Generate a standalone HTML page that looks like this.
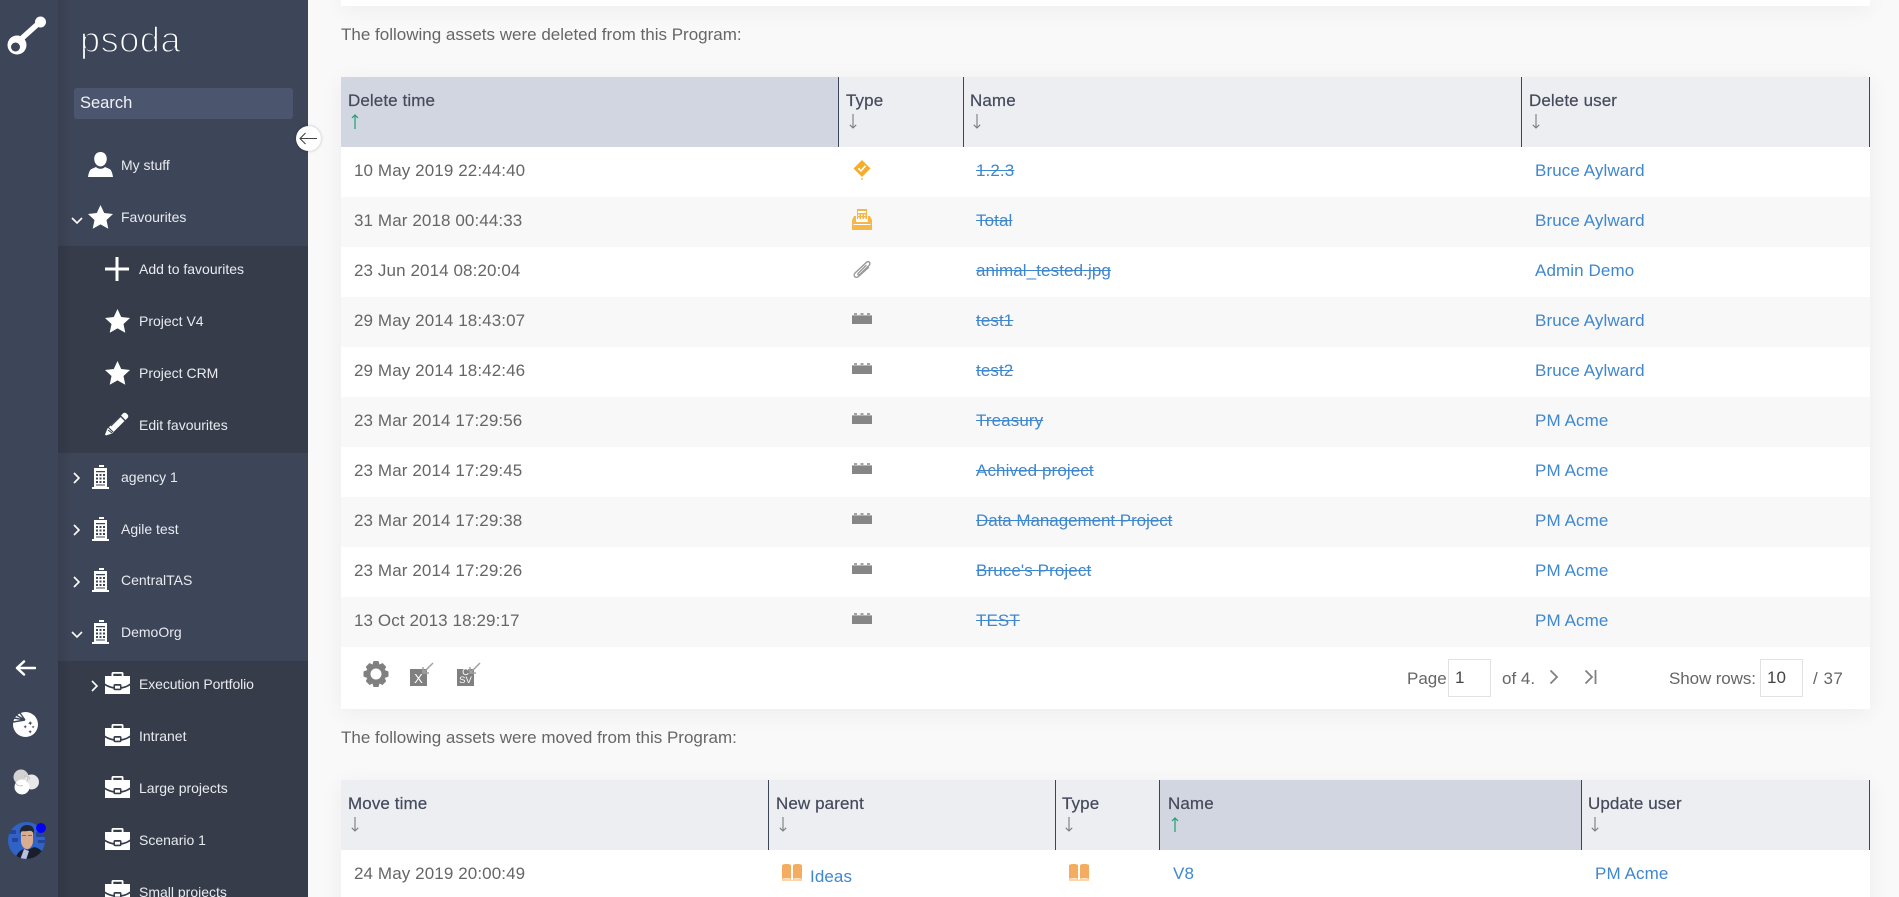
<!DOCTYPE html>
<html lang="en"><head><meta charset="utf-8"><title>psoda</title>
<style>
html,body{margin:0;padding:0;width:1899px;height:897px;overflow:hidden}
body{background:#f9f9f9;font-family:"Liberation Sans",sans-serif;color:#666}
#w{position:relative;display:block;left:0;top:0;width:1899px;height:897px;overflow:hidden;background:#f9f9f9}
#w div,#w a,#w svg,#w span{position:absolute}
.t{white-space:nowrap;font-size:17px;line-height:20px}
.rail{left:0;top:0;width:58px;height:897px;background:#3d4659}
.side{left:58px;top:0;width:250px;height:897px;background:#3d4558;overflow:hidden}
.shade{left:58px;top:0;width:14px;height:897px;background:linear-gradient(90deg,rgba(0,0,0,.09),rgba(0,0,0,0))}
.sub{left:0;width:250px;background:#363c4a}
.m{color:#e9ebef;font-size:14px;line-height:20px;white-space:nowrap}
.card{background:#fff;left:341px;width:1529px;box-shadow:0 4px 22px rgba(0,0,0,.055)}
.h{height:70px;background:#edeef2;box-sizing:border-box;border-right:1px solid #3d4558}
.h.on{background:#d2d6e0}
.hd{color:#444a5c;font-size:17px;line-height:20px;white-space:nowrap;-webkit-text-stroke:.2px #444a5c;letter-spacing:.1px}
.r{left:341px;width:1529px;height:50px;background:#fff}
.r.a{background:#f8f8f9}
.l{color:#3f87cf;font-size:17px;line-height:20px;white-space:nowrap;letter-spacing:.1px}
.s{text-decoration:line-through}
.d{color:#666;font-size:17px;line-height:20px;white-space:nowrap;letter-spacing:.1px}
input{position:absolute;box-sizing:border-box;border:1px solid #e2e2e2;background:#fff;font:17px "Liberation Sans",sans-serif;color:#444;padding:0 0 0 6px;width:43px;height:38px;outline:none}
</style></head><body><div id="w">
<svg width="0" height="0" style="left:0;top:0">
<defs>
<symbol id="star" viewBox="0 0 25 24"><path fill="#fff" d="M12.500 0l3.700 8 8.800 1-6.500 6 1.800 8.800-7.800-4.400-7.800 4.400L6.500 15 0 9l8.800-1z"/></symbol>
<symbol id="user" viewBox="0 0 25 25"><path fill="#fff" d="M12.500 0c3.900 0 6.300 3 6.300 6.800 0 4-2.700 7.700-6.300 7.700S6.200 10.800 6.200 6.800C6.200 3 8.600 0 12.500 0zM8 15c1.400 1.400 3 1.800 4.500 1.800S15.600 16.400 17 15l4.500 2c2 1 3 4.500 3.500 8H0c.5-3.500 1.500-7 3.500-8z"/></symbol>
<symbol id="bld" viewBox="0 0 17 24"><path fill="#fff" d="M7 0h5v2H7zM2 3h13v19h2v2H0v-2h2z"/><path fill="#3d4558" d="M4 6h9v1.200H4zM4 9h2v2H4zm3.500 0h2v2h-2zM11 9h2v2h-2zM4 12.500h2v2H4zm3.500 0h2v2h-2zm3.500 0h2v2h-2zM4 16h2v2H4zm3.500 0h2v2h-2zm3.500 0h2v2h-2zM4 19.500h9v1H4z"/></symbol>
<symbol id="brief" viewBox="0 0 25 22"><path fill="#fff" d="M8 0h9c1 0 1.500.8 1.500 1.500V4H25v7.500c-3 2-6 3-8.500 3.400v-1.400c0-1-.6-1.500-1.500-1.500h-5c-.9 0-1.500.5-1.500 1.500v1.400C6 14.500 3 13.500 0 11.500V4h6.500V1.500C6.500.8 7 0 8 0zm.3 1.800V4h8.400V1.800zM0 13.500c3 1.800 6 2.800 8.500 3.200 0 1 .6 1.500 1.500 1.500h5c.9 0 1.500-.5 1.500-1.500 2.500-.4 5.500-1.400 8.500-3.200V22H0zM10 13.800h5v2.800h-5z"/></symbol>
<symbol id="blk" viewBox="0 0 20 11"><path fill="#868686" d="M0 2.400h20V11H0zM2 .3h3v1.400H2zM8.500.3h3v1.400h-3zM15 .3h3v1.400h-3z"/></symbol>
<symbol id="book" viewBox="0 0 20 18"><path fill="#f4ac60" d="M0 2c3-1.500 6.500-1.500 9 0v14c-2.500-1.300-6-1.300-9 0zM20 2c-3-1.500-6.500-1.500-9 0v14c2.500-1.300 6-1.300 9 0z"/><path fill="#fbd5a9" d="M0 16.300c3-1.300 6.500-1.300 10 .4 3.500-1.700 7-1.700 10-.4V18H0z"/></symbol>
<symbol id="up" viewBox="0 0 12 15"><path fill="none" stroke="#1f9d74" stroke-width="1.200" d="M6 15V1M3 4L6 1l3 3"/></symbol>
<symbol id="dn" viewBox="0 0 12 15"><path fill="none" stroke="#7c7c7c" stroke-width="1.100" d="M6 0v14M2.800 10.800L6 14l3.200-3.200"/></symbol>
<symbol id="cr" viewBox="0 0 10 12"><path fill="none" stroke="#fff" stroke-width="1.600" d="M2 1l5 5-5 5"/></symbol>
<symbol id="cd" viewBox="0 0 12 10"><path fill="none" stroke="#fff" stroke-width="1.600" d="M1 2l5 5 5-5"/></symbol>
</defs></svg>

<!-- main -->
<div class="card" style="top:-10px;height:16px"></div>
<div class="t" style="left:341px;top:25px;">The following assets were deleted from this Program:</div>

<div class="card" style="top:77px;height:632px"></div>
<div class="h on" style="left:341px;top:77px;width:498px"></div>
<div class="h" style="left:839px;top:77px;width:125px"></div>
<div class="h" style="left:964px;top:77px;width:558px"></div>
<div class="h" style="left:1522px;top:77px;width:348px"></div>
<div class="hd" style="left:348px;top:91px">Delete time</div><svg style="left:349px;top:114px" width="12" height="15"><use href="#up"/></svg>
<div class="hd" style="left:846px;top:91px">Type</div><svg style="left:847px;top:114px" width="12" height="15"><use href="#dn"/></svg>
<div class="hd" style="left:970px;top:91px">Name</div><svg style="left:971px;top:114px" width="12" height="15"><use href="#dn"/></svg>
<div class="hd" style="left:1529px;top:91px">Delete user</div><svg style="left:1530px;top:114px" width="12" height="15"><use href="#dn"/></svg>

<div class="r" style="top:147px"></div><div class="r a" style="top:197px"></div><div class="r" style="top:247px"></div><div class="r a" style="top:297px"></div><div class="r" style="top:347px"></div><div class="r a" style="top:397px"></div><div class="r" style="top:447px"></div><div class="r a" style="top:497px"></div><div class="r" style="top:547px"></div><div class="r a" style="top:597px"></div>

<div class="d" style="left:354px;top:161px">10 May 2019 22:44:40</div>
<div class="d" style="left:354px;top:211px">31 Mar 2018 00:44:33</div>
<div class="d" style="left:354px;top:261px">23 Jun 2014 08:20:04</div>
<div class="d" style="left:354px;top:311px">29 May 2014 18:43:07</div>
<div class="d" style="left:354px;top:361px">29 May 2014 18:42:46</div>
<div class="d" style="left:354px;top:411px">23 Mar 2014 17:29:56</div>
<div class="d" style="left:354px;top:461px">23 Mar 2014 17:29:45</div>
<div class="d" style="left:354px;top:511px">23 Mar 2014 17:29:38</div>
<div class="d" style="left:354px;top:561px">23 Mar 2014 17:29:26</div>
<div class="d" style="left:354px;top:611px">13 Oct 2013 18:29:17</div>

<svg style="left:852px;top:159px" width="20" height="22" viewBox="0 0 20 22"><path fill="#f5ad2e" d="M10 1l8.500 8.500L10 18 1.500 9.500z"/><path fill="none" stroke="#fff" stroke-width="1.600" d="M6.300 9.300l2.700 2.500 4.500-5"/><rect x="9" y="19" width="2" height="2" fill="#f8cd80"/></svg>
<svg style="left:852px;top:209px" width="20" height="21" viewBox="0 0 20 21"><path fill="#f7b748" d="M5 0h10v10H5zM0 11l2-4h2v6h12V7h2l2 4v10H0z"/><path fill="#fff" d="M6 2h8v2H6zM6 5.500h1.500V7H6zm3 0h1.500V7H9zm3 0h1.500V7H12zM6 8.500h1.500V10H6zm3 0h1.500V10H9zm3 0h1.500V10H12zM5 11.500h10V13H5zM1.500 15h17v1h-17z"/></svg>
<svg style="left:852px;top:260px" width="20" height="19" viewBox="0 0 20 19"><path fill="none" stroke="#9a9a9a" stroke-width="1.400" stroke-linecap="round" d="M14 5.500L6.500 13c-1.300 1.300-.3 2.800 1 1.800L17 5.500c2-2 .2-5-2.300-3.400L3 13c-2.500 2.700.8 6 3.500 3.500L16.500 7.500"/></svg>
<svg style="left:852px;top:313px" width="20" height="11"><use href="#blk"/></svg>
<svg style="left:852px;top:363px" width="20" height="11"><use href="#blk"/></svg>
<svg style="left:852px;top:413px" width="20" height="11"><use href="#blk"/></svg>
<svg style="left:852px;top:463px" width="20" height="11"><use href="#blk"/></svg>
<svg style="left:852px;top:513px" width="20" height="11"><use href="#blk"/></svg>
<svg style="left:852px;top:563px" width="20" height="11"><use href="#blk"/></svg>
<svg style="left:852px;top:613px" width="20" height="11"><use href="#blk"/></svg>

<div class="l s" style="left:976px;top:161px">1.2.3</div>
<div class="l s" style="left:976px;top:211px">Total</div>
<div class="l s" style="left:976px;top:261px">animal_tested.jpg</div>
<div class="l s" style="left:976px;top:311px">test1</div>
<div class="l s" style="left:976px;top:361px">test2</div>
<div class="l s" style="left:976px;top:411px">Treasury</div>
<div class="l s" style="left:976px;top:461px">Achived project</div>
<div class="l s" style="left:976px;top:511px;letter-spacing:-.05px">Data Management Project</div>
<div class="l s" style="left:976px;top:561px">Bruce's Project</div>
<div class="l s" style="left:976px;top:611px">TEST</div>

<div class="l" style="left:1535px;top:161px">Bruce Aylward</div>
<div class="l" style="left:1535px;top:211px">Bruce Aylward</div>
<div class="l" style="left:1535px;top:261px">Admin Demo</div>
<div class="l" style="left:1535px;top:311px">Bruce Aylward</div>
<div class="l" style="left:1535px;top:361px">Bruce Aylward</div>
<div class="l" style="left:1535px;top:411px">PM Acme</div>
<div class="l" style="left:1535px;top:461px">PM Acme</div>
<div class="l" style="left:1535px;top:511px">PM Acme</div>
<div class="l" style="left:1535px;top:561px">PM Acme</div>
<div class="l" style="left:1535px;top:611px">PM Acme</div>

<!-- footer -->
<svg style="left:363px;top:661px" width="26" height="26" viewBox="0 0 26 26"><path fill="#808080" fill-rule="evenodd" d="M10.500 0h5l1 3.500 3-1.500 3.700 3.700L21.700 9l3.800 1.500v5L21.700 17l1.500 3.300-3.700 3.700-3-1.500-1 3.500h-5l-1-3.500-3 1.500-3.700-3.700L4.300 17 .5 15.500v-5L4.300 9 2.800 5.700 6.500 2l3 1.500zM13 7.500a5.500 5.500 0 1 0 0 11 5.500 5.500 0 0 0 0-11z"/></svg>
<svg style="left:410px;top:662px" width="24" height="24" viewBox="0 0 24 24"><rect x="0" y="7" width="17" height="17" fill="#808080"/><path fill="none" stroke="#a0a0a0" stroke-width="1.500" d="M23 1l-10 10M13 5v6h6"/></svg>
<div style="left:410px;top:671px;width:17px;text-align:center;color:#fff;font-size:13px;line-height:15px">X</div>
<svg style="left:457px;top:662px" width="24" height="24" viewBox="0 0 24 24"><rect x="0" y="7" width="17" height="17" fill="#808080"/><path fill="none" stroke="#a0a0a0" stroke-width="1.500" d="M23 1l-10 10M13 5v6h6"/></svg>
<div style="left:457px;top:669px;width:17px;text-align:center;color:#fff;font-size:9.500px;line-height:8px">C<br>SV</div>

<div class="t" style="left:1407px;top:669px">Page</div>
<input value="1" style="left:1448px;top:659px">
<div class="t" style="left:1502px;top:669px">of 4.</div>
<svg style="left:1549px;top:669px" width="10" height="16" viewBox="0 0 10 16"><path fill="none" stroke="#808080" stroke-width="1.800" d="M1.500 1.500L8 8l-6.500 6.500"/></svg>
<svg style="left:1584px;top:669px" width="14" height="16" viewBox="0 0 14 16"><path fill="none" stroke="#808080" stroke-width="1.800" d="M1.500 1.500L8 8l-6.500 6.500M11.500 1v14"/></svg>
<div class="t" style="left:1669px;top:669px;letter-spacing:-.1px">Show rows:</div>
<input value="10" style="left:1760px;top:659px">
<div class="t" style="left:1813px;top:669px;letter-spacing:.5px">/ 37</div>

<div class="t" style="left:341px;top:728px">The following assets were moved from this Program:</div>

<div class="card" style="top:780px;height:140px"></div>
<div class="h" style="left:341px;top:780px;width:428px"></div>
<div class="h" style="left:769px;top:780px;width:287px"></div>
<div class="h" style="left:1056px;top:780px;width:104px"></div>
<div class="h on" style="left:1160px;top:780px;width:422px"></div>
<div class="h" style="left:1582px;top:780px;width:288px"></div>
<div class="hd" style="left:348px;top:794px">Move time</div><svg style="left:349px;top:817px" width="12" height="15"><use href="#dn"/></svg>
<div class="hd" style="left:776px;top:794px">New parent</div><svg style="left:777px;top:817px" width="12" height="15"><use href="#dn"/></svg>
<div class="hd" style="left:1062px;top:794px">Type</div><svg style="left:1063px;top:817px" width="12" height="15"><use href="#dn"/></svg>
<div class="hd" style="left:1168px;top:794px">Name</div><svg style="left:1169px;top:817px" width="12" height="15"><use href="#up"/></svg>
<div class="hd" style="left:1588px;top:794px">Update user</div><svg style="left:1589px;top:817px" width="12" height="15"><use href="#dn"/></svg>

<div class="d" style="left:354px;top:864px">24 May 2019 20:00:49</div>
<svg style="left:782px;top:863px" width="20" height="18"><use href="#book"/></svg>
<div class="l" style="left:810px;top:867px">Ideas</div>
<svg style="left:1069px;top:863px" width="20" height="18"><use href="#book"/></svg>
<div class="l" style="left:1173px;top:864px">V8</div>
<div class="l" style="left:1595px;top:864px">PM Acme</div>

<!-- sidebar -->
<div class="side">
 <div class="sub" style="top:246px;height:207px"></div>
 <div class="sub" style="top:661px;height:236px"></div>
 <div style="left:22px;top:10px;font-size:36px;line-height:60px;letter-spacing:.6px;color:#fff;-webkit-text-stroke:1.400px #3d4558;white-space:nowrap">psoda</div>
 <div style="left:16px;top:88px;width:219px;height:31px;background:#4b566e;border-radius:3px"></div>
 <div style="left:22px;top:93px;color:#f1f2f5;font-size:16.500px;line-height:20px">Search</div>

 <svg style="left:30px;top:152px" width="25" height="25"><use href="#user"/></svg><div class="m" style="left:63px;top:155px">My stuff</div>
 <svg style="left:13px;top:216px" width="12" height="10"><use href="#cd"/></svg>
 <svg style="left:30px;top:205px" width="25" height="24"><use href="#star"/></svg><div class="m" style="left:63px;top:207px">Favourites</div>

 <svg style="left:47px;top:257px" width="24" height="24" viewBox="0 0 24 24"><path fill="#fff" d="M10.500 0h3v10.500H24v3H13.500V24h-3V13.500H0v-3h10.500z"/></svg><div class="m" style="left:81px;top:259px">Add to favourites</div>
 <svg style="left:47px;top:309px" width="25" height="24"><use href="#star"/></svg><div class="m" style="left:81px;top:311px">Project V4</div>
 <svg style="left:47px;top:361px" width="25" height="24"><use href="#star"/></svg><div class="m" style="left:81px;top:363px">Project CRM</div>
 <svg style="left:47px;top:412px" width="24" height="24" viewBox="0 0 24 24"><path fill="#fff" d="M18 1.500c1-1 2.500-1 3.500 0l1 1c1 1 1 2.500 0 3.500l-2 2-4.500-4.500zM15 4.500L19.500 9 7 21.500 1 23.500l-1-1 2.500-6z"/><path fill="none" stroke="#363c4a" stroke-width="1" d="M3.500 15.500L8 20M6 14l10-10M3 18l4 3"/></svg><div class="m" style="left:81px;top:415px">Edit favourites</div>

 <svg style="left:14px;top:472px" width="10" height="12"><use href="#cr"/></svg>
 <svg style="left:34px;top:465px" width="17" height="24"><use href="#bld"/></svg><div class="m" style="left:63px;top:467px">agency 1</div>
 <svg style="left:14px;top:524px" width="10" height="12"><use href="#cr"/></svg>
 <svg style="left:34px;top:517px" width="17" height="24"><use href="#bld"/></svg><div class="m" style="left:63px;top:519px">Agile test</div>
 <svg style="left:14px;top:576px" width="10" height="12"><use href="#cr"/></svg>
 <svg style="left:34px;top:568px" width="17" height="24"><use href="#bld"/></svg><div class="m" style="left:63px;top:570px">CentralTAS</div>
 <svg style="left:13px;top:630px" width="12" height="10"><use href="#cd"/></svg>
 <svg style="left:34px;top:620px" width="17" height="24"><use href="#bld"/></svg><div class="m" style="left:63px;top:622px">DemoOrg</div>

 <svg style="left:32px;top:680px" width="10" height="12"><use href="#cr"/></svg>
 <svg style="left:47px;top:672px" width="25" height="22"><use href="#brief"/></svg><div class="m" style="left:81px;top:674px;letter-spacing:-.1px">Execution Portfolio</div>
 <svg style="left:47px;top:724px" width="25" height="22"><use href="#brief"/></svg><div class="m" style="left:81px;top:726px">Intranet</div>
 <svg style="left:47px;top:776px" width="25" height="22"><use href="#brief"/></svg><div class="m" style="left:81px;top:778px">Large projects</div>
 <svg style="left:47px;top:828px" width="25" height="22"><use href="#brief"/></svg><div class="m" style="left:81px;top:830px">Scenario 1</div>
 <svg style="left:47px;top:880px" width="25" height="22"><use href="#brief"/></svg><div class="m" style="left:81px;top:882px">Small projects</div>
</div>

<!-- rail -->
<div class="rail"></div>
<div class="shade"></div>
<svg style="left:6px;top:14px" width="42" height="42" viewBox="0 0 42 42"><path fill="none" stroke="#fff" stroke-width="5.500" stroke-linecap="round" d="M14 26L34 8"/><circle cx="34.500" cy="8" r="5.500" fill="#fff"/><circle cx="11" cy="31" r="9.500" fill="#fff"/><circle cx="9.500" cy="33" r="4.500" fill="#3d4659"/></svg>
<svg style="left:15px;top:660px" width="21" height="16" viewBox="0 0 21 16"><path fill="none" stroke="#fff" stroke-width="2.500" stroke-linecap="round" stroke-linejoin="round" d="M20 8H2M9 1.500L2 8l7 6.500"/></svg>
<svg style="left:13px;top:711.500px" width="25" height="25" viewBox="0 0 25 25"><circle cx="12.500" cy="12.500" r="12.500" fill="#fff"/><path fill="none" stroke="#3d4659" stroke-width="1.400" d="M1 6l11 2M3 3l9 5M7 1l5 7M0 10l12-2"/><path fill="#3d4659" d="M17 9l1 1.500 1.500.5-1.500.8-.5 1.500-1-1.500-1.500-.5 1.500-.8zM12 13l.8 1.200 1.200.5-1.200.6-.5 1.200-.8-1.200-1-.5 1.200-.6zM20 13.500l.6 1 1 .4-1 .5-.4 1-.6-1-1-.4 1-.5zM17 18l.8 1.200 1.200.5-1.200.6-.5 1.200-.8-1.200-1.200-.5 1.200-.6z"/></svg>
<svg style="left:13px;top:769px" width="27" height="26" viewBox="0 0 27 26"><circle cx="8" cy="8" r="7.500" fill="#d3d3d3"/><circle cx="18.500" cy="13" r="7.500" fill="#e8e8e8"/><circle cx="9" cy="18" r="7.500" fill="#fff"/><path fill="none" stroke="#bdbdbd" stroke-width=".8" d="M11 7.300c3.500-1 6 1 5.500 3.500M2.500 13.500c.5 2.500 4 4.200 7.500 3M15 7l-1 6"/></svg>
<svg style="left:8px;top:822px" width="38" height="38" viewBox="0 0 38 38"><defs><clipPath id="av"><circle cx="18.500" cy="18.500" r="18.500"/></clipPath></defs><g clip-path="url(#av)"><rect width="38" height="38" fill="#2f63c8"/><path fill="#26459a" d="M0 8h8v4H0zM4 16h6v4H4zM28 10h9v5h-9zM30 18h8v3h-8z"/><path fill="#1a1e2c" d="M7 38c2-8 6-10 9-11l4 1 6-3c6 1 11 6 11 13z"/><path fill="#b7bfe0" d="M12 38l4-11 5 2-3 9z"/><path fill="#d9ad90" d="M13 9h12v10c0 4-2.500 8-6 8s-6-4-6-8z"/><path fill="#26262a" d="M12 12c-1-6 3-9 7-9s8 2 7 9c-1-2-2-3-4-3.500-3 .8-6 .8-8 .8-1 .6-2 1.500-2 2.700z"/><path fill="none" stroke="#6a5245" stroke-width=".7" d="M14 13.500h4m2 0h4"/></g></svg>
<div style="left:36px;top:823px;width:10px;height:10px;background:#0000f5;border-radius:50%"></div>

<!-- collapse -->
<div style="left:296px;top:126px;width:25px;height:25px;border-radius:50%;background:#fff;box-shadow:0 0 3px rgba(0,0,0,.25)"></div>
<svg style="left:299px;top:132px" width="19" height="13" viewBox="0 0 19 13"><path fill="none" stroke="#444" stroke-width="1.100" d="M18 6.500H1M6.500 1L1 6.500 6.500 12"/></svg>
</div></body></html>
